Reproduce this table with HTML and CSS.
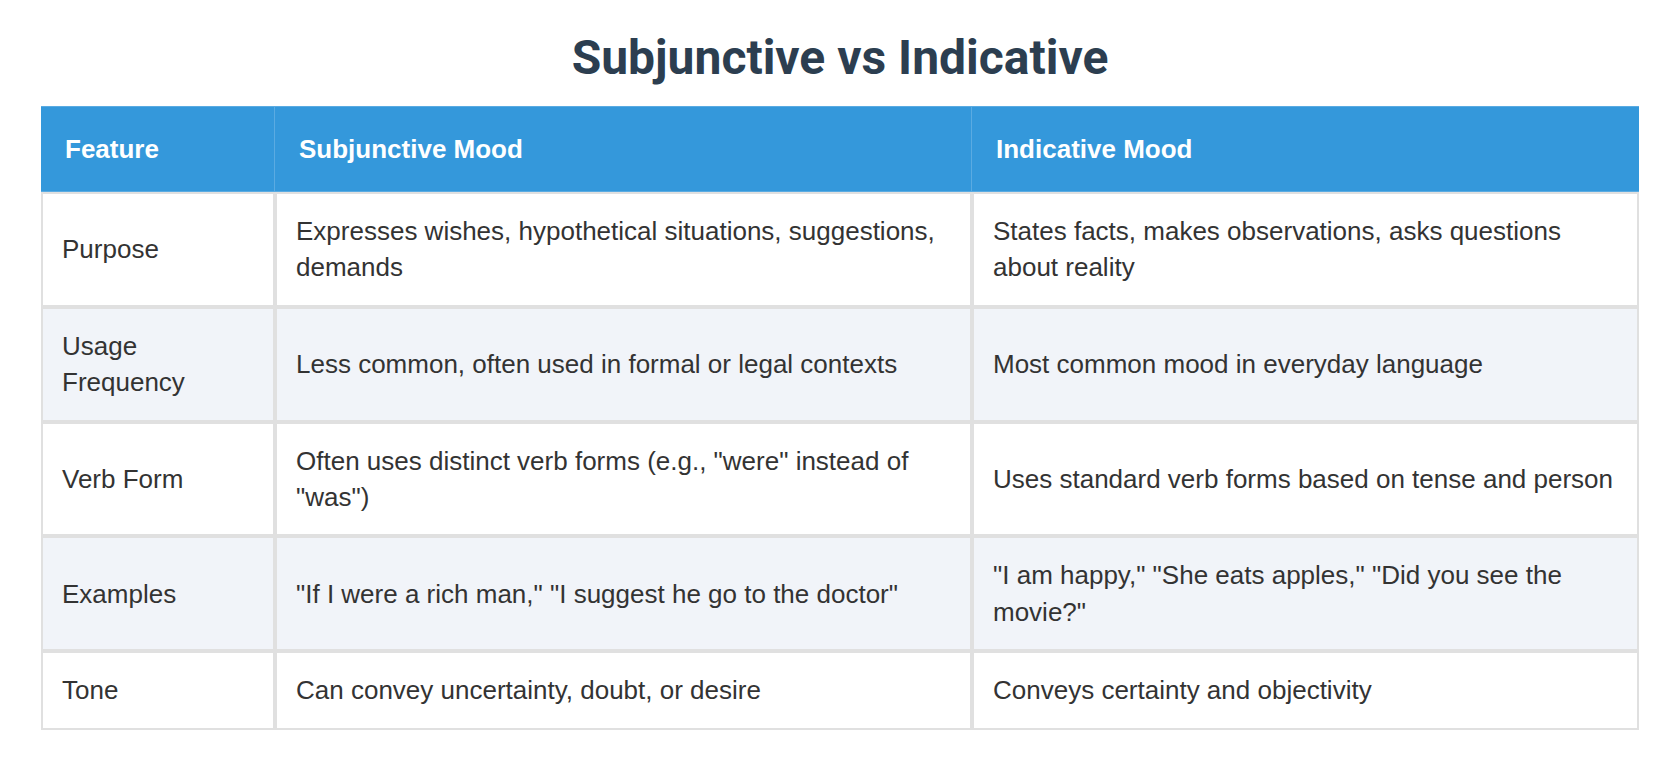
FILE: index.html
```html
<!DOCTYPE html>
<html lang="en">
<head>
<meta charset="utf-8">
<title>Subjunctive vs Indicative</title>
<link rel="stylesheet" href="styles.css">
</head>
<body>
<main class="page">
  <h1 class="title">Subjunctive vs Indicative</h1>
  <table class="compare">
    <colgroup>
      <col class="col-feature">
      <col class="col-subj">
      <col class="col-ind">
    </colgroup>
    <thead>
      <tr>
        <th>Feature</th>
        <th>Subjunctive Mood</th>
        <th>Indicative Mood</th>
      </tr>
    </thead>
    <tbody>
      <tr>
        <td>Purpose</td>
        <td>Expresses wishes, hypothetical situations, suggestions, demands</td>
        <td>States facts, makes observations, asks questions about reality</td>
      </tr>
      <tr>
        <td>Usage Frequency</td>
        <td>Less common, often used in formal or legal contexts</td>
        <td>Most common mood in everyday language</td>
      </tr>
      <tr>
        <td>Verb Form</td>
        <td>Often uses distinct verb forms (e.g., "were" instead of "was")</td>
        <td>Uses standard verb forms based on tense and person</td>
      </tr>
      <tr>
        <td>Examples</td>
        <td>"If I were a rich man," "I suggest he go to the doctor"</td>
        <td>"I am happy," "She eats apples," "Did you see the movie?"</td>
      </tr>
      <tr>
        <td>Tone</td>
        <td>Can convey uncertainty, doubt, or desire</td>
        <td>Conveys certainty and objectivity</td>
      </tr>
    </tbody>
  </table>
</main>
</body>
</html>
```
FILE: styles.css
```css
html, body {
  margin: 0;
  padding: 0;
  background: #ffffff;
}

.page {
  padding: 0 41px;
  font-family: "Liberation Sans", Arial, sans-serif;
  color: #333333;
}

.title {
  margin: 29px 0 19px;
  font-family: Roboto, "Liberation Sans", sans-serif;
  font-weight: 700;
  font-size: 48px;
  line-height: 1.2;
  text-align: center;
  color: #2c3e50;
}

.compare {
  width: 100%;
  border-collapse: separate;
  border-spacing: 0;
  table-layout: fixed;
  font-size: 26px;
  line-height: 1.4;
}

.col-feature { width: 234px; }
.col-subj { width: 697px; }
.col-ind { width: auto; }

.compare th {
  background: #3498db;
  color: #ffffff;
  font-weight: 700;
  text-align: left;
  padding: 24px 24px;
  border-top: 1px solid #5aabe2;
  border-bottom: 1px solid #5aabe2;
  border-right: 1px solid #5aabe2;
}

.compare th:first-child {
  border-left: 0;
}

.compare th:last-child {
  border-right: 0;
}

.compare td {
  padding: 19px 19px;
  border: 2px solid #e0e0e0;
  vertical-align: middle;
  text-align: left;
}

.compare tbody tr:nth-child(even) td {
  background: #f1f4f9;
}
```
